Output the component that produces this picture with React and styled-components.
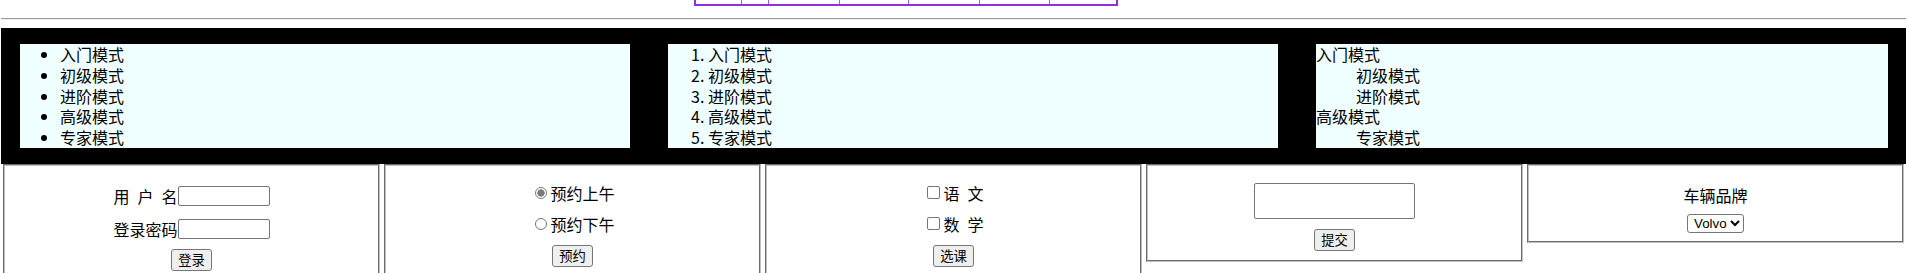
import React from 'react';
import styled, { createGlobalStyle } from 'styled-components';

const GlobalStyle = createGlobalStyle`
  body {
    margin: 0;
    background: #fff;
    color: #000;
    font-family: "Noto Sans CJK SC", "Noto Sans", sans-serif;
    font-size: 16px;
  }
`;

const modes = ['入门模式', '初级模式', '进阶模式', '高级模式', '专家模式'];
const tableCols = [45, 27, 71, 69, 71, 70, 67];

const Page = styled.div`
  padding: 0 1px;
`;

// only the bottom edge of the table is still on screen
const TableStub = styled.div`
  display: flex;
  width: max-content;
  margin-left: 693px;
  border: 2px solid #8f2fe3;
  border-top: none;
`;

const StubCell = styled.div`
  height: 4px;
  box-sizing: border-box;
  width: ${p => p.$w}px;
  border-left: ${p => (p.$first ? 'none' : '1px solid #a35ae8')};
`;

const Rule = styled.hr`
  margin: 12px 0 8px;
  height: 0;
  border: none;
  border-top: 1px solid #9a9a9a;
  border-bottom: 1px solid #eeeeee;
`;

const Stage = styled.div`
  display: grid;
  grid-template-columns: 610px 610px 572px;
  column-gap: 38px;
  background: #000;
  padding: 16px 18px 16px 19px;
`;

const listBase = `
  margin: 0;
  background: #f0ffff;
  line-height: 20.8px;
`;

const BulletList = styled.ul`
  ${listBase}
  padding-left: 40px;
  list-style: disc;
`;

const NumberList = styled.ol`
  ${listBase}
  padding-left: 40px;
`;

const TermList = styled.dl`
  ${listBase}
  padding: 0;

  dt { margin: 0; }
  dd { margin: 0 0 0 40px; }
`;

const Panels = styled.div`
  display: flex;
  align-items: flex-start;
`;

const Panel = styled.form`
  flex: 1;
  margin: 0 2px;
  box-sizing: border-box;
  border: 2px groove #c0c0c0;
  display: flex;
  flex-direction: column;
  align-items: center;
  padding: ${p => p.$pt}px 0 ${p => p.$pb}px;
  gap: ${p => p.$gap}px;
`;

const Row = styled.div`
  display: flex;
  align-items: center;
  height: 20px;
  line-height: 20px;
`;

const TextField = styled.input`
  box-sizing: border-box;
  width: 92px;
  height: 20px;
  margin: 0;
  padding: 1px 2px;
  border: 1px solid #767676;
  border-radius: 2px;
  background: #fff;
`;

const TextBox = styled.textarea`
  box-sizing: border-box;
  width: 161px;
  height: 36px;
  margin: 0;
  border: 1px solid #767676;
  border-radius: 2px;
  resize: none;
`;

const Button = styled.button`
  box-sizing: border-box;
  height: 22px;
  margin-top: ${p => p.$shift || 0}px;
  padding: 0 6px;
  border: 1px solid #767676;
  border-radius: 3px;
  background: #efefef;
  font-family: "Noto Sans CJK SC", sans-serif;
  font-size: 13.33px;
  line-height: 20px;
  color: #000;
`;

const Radio = styled.input.attrs({ type: 'radio' })`
  appearance: none;
  box-sizing: border-box;
  width: 12px;
  height: 12px;
  margin: 0 3px 0 5px;
  border: 1px solid #767676;
  border-radius: 50%;
  background: #fff;

  &:checked {
    border-color: #7a7a7a;
    background: radial-gradient(circle, #7a7a7a 0 3.4px, #fff 3.9px);
  }
`;

const Check = styled.input.attrs({ type: 'checkbox' })`
  appearance: none;
  box-sizing: border-box;
  width: 13px;
  height: 13px;
  margin: 0 3px 0 4px;
  border: 1px solid #767676;
  border-radius: 2px;
  background: #fff;
`;

const Select = styled.select`
  box-sizing: border-box;
  width: 57px;
  height: 19px;
  padding: 0 0 0 2px;
  border: 1px solid #767676;
  border-radius: 3px;
  background: #fff;
  font-family: "Liberation Sans", Arial, sans-serif;
  font-size: 13.33px;
  color: #000;
`;

const App = () => {
  return (
    <Page>
      <GlobalStyle />
      <TableStub>
        {tableCols.map((w, i) => (
          <StubCell key={i} $w={w} $first={i === 0} />
        ))}
      </TableStub>
      <Rule />

      <Stage>
        <BulletList>
          {modes.map(m => <li key={m}>{m}</li>)}
        </BulletList>
        <NumberList>
          {modes.map(m => <li key={m}>{m}</li>)}
        </NumberList>
        <TermList>
          <dt>入门模式</dt>
          <dd>初级模式</dd>
          <dd>进阶模式</dd>
          <dt>高级模式</dt>
          <dd>专家模式</dd>
        </TermList>
      </Stage>

      <Panels>
        <Panel $pt={20} $pb={12} $gap={13}>
          <Row>用&ensp;户&ensp;名<TextField type="text" /></Row>
          <Row>登录密码<TextField type="password" /></Row>
          <Button type="button" $shift={-3}>登录</Button>
        </Panel>

        <Panel $pt={17} $pb={12} $gap={11}>
          <Row><Radio name="slot" defaultChecked />预约上午</Row>
          <Row><Radio name="slot" />预约下午</Row>
          <Button type="button">预约</Button>
        </Panel>

        <Panel $pt={17} $pb={12} $gap={11}>
          <Row><Check />语&ensp;文</Row>
          <Row><Check />数&ensp;学</Row>
          <Button type="button">选课</Button>
        </Panel>

        <Panel $pt={17} $pb={9} $gap={10}>
          <TextBox />
          <Button type="button">提交</Button>
        </Panel>

        <Panel $pt={19} $pb={8} $gap={9}>
          <Row>车辆品牌</Row>
          <Select defaultValue="volvo">
            <option value="volvo">Volvo</option>
            <option value="saab">Saab</option>
            <option value="audi">Audi</option>
          </Select>
        </Panel>
      </Panels>
    </Page>
  );
};

export default App;
